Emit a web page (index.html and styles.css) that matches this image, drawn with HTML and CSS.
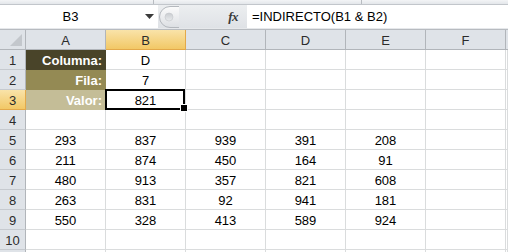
FILE: index.html
```html
<!DOCTYPE html>
<html lang="es">
<head>
<meta charset="utf-8">
<title>INDIRECTO</title>
<link rel="stylesheet" href="styles.css">
</head>
<body>
<div class="fbar">
  <div class="strip"><span class="sep s1"></span><span class="sep s2"></span></div>
  <div class="frow">
    <div class="namebox">
      <span class="ref">B3</span>
      <svg class="dd" width="9" height="5" viewBox="0 0 9 5"><path d="M0 0H9L4.5 5Z" fill="#3b3b3b"/></svg>
    </div>
    <div class="mid">
      <svg class="knob" width="20" height="22" viewBox="0 0 20 22">
        <defs>
          <linearGradient id="kg" x1="0" y1="0" x2="0" y2="1">
            <stop offset="0" stop-color="#fbfbfb"/>
            <stop offset="1" stop-color="#dcdfe3"/>
          </linearGradient>
          <linearGradient id="dg" x1="0" y1="0" x2="0" y2="1">
            <stop offset="0" stop-color="#c9ccd0"/>
            <stop offset="1" stop-color="#e9ebed"/>
          </linearGradient>
        </defs>
        <path d="M20 0.5H11A10.5 10.5 0 0 0 11 21.5H20" fill="url(#kg)" stroke="#b4b8bd"/>
        <circle cx="10" cy="11" r="4" fill="url(#dg)" stroke="#c4c7cb" stroke-width="0.6"/>
      </svg>
      <span class="fx">fx</span>
    </div>
    <div class="input">=INDIRECTO(B1 &amp; B2)</div>
  </div>
</div>
<div class="sheet">
  <div class="hd corner"><svg width="12" height="12" viewBox="0 0 12 12"><path d="M12 0V12H0Z" fill="#c3c7cc"/></svg></div>
  <div class="hd col">A</div>
  <div class="hd col sel">B</div>
  <div class="hd col">C</div>
  <div class="hd col">D</div>
  <div class="hd col">E</div>
  <div class="hd col">F</div>
  <div class="hd col rest"></div>

  <div class="hd row">1</div>
  <div class="c lbl l1">Columna:</div>
  <div class="c">D</div>
  <div class="c"></div><div class="c"></div><div class="c"></div><div class="c"></div><div class="c"></div>

  <div class="hd row">2</div>
  <div class="c lbl l2">Fila:</div>
  <div class="c">7</div>
  <div class="c"></div><div class="c"></div><div class="c"></div><div class="c"></div><div class="c"></div>

  <div class="hd row sel">3</div>
  <div class="c lbl l3">Valor:</div>
  <div class="c active">821</div>
  <div class="c"></div><div class="c"></div><div class="c"></div><div class="c"></div><div class="c"></div>

  <div class="hd row">4</div>
  <div class="c"></div><div class="c"></div><div class="c"></div><div class="c"></div><div class="c"></div><div class="c"></div><div class="c"></div>

  <div class="hd row">5</div>
  <div class="c">293</div><div class="c">837</div><div class="c">939</div><div class="c">391</div><div class="c">208</div><div class="c"></div><div class="c"></div>

  <div class="hd row">6</div>
  <div class="c">211</div><div class="c">874</div><div class="c">450</div><div class="c">164</div><div class="c">91</div><div class="c"></div><div class="c"></div>

  <div class="hd row">7</div>
  <div class="c">480</div><div class="c">913</div><div class="c">357</div><div class="c">821</div><div class="c">608</div><div class="c"></div><div class="c"></div>

  <div class="hd row">8</div>
  <div class="c">263</div><div class="c">831</div><div class="c">92</div><div class="c">941</div><div class="c">181</div><div class="c"></div><div class="c"></div>

  <div class="hd row">9</div>
  <div class="c">550</div><div class="c">328</div><div class="c">413</div><div class="c">589</div><div class="c">924</div><div class="c"></div><div class="c"></div>

  <div class="hd row">10</div>
  <div class="c"></div><div class="c"></div><div class="c"></div><div class="c"></div><div class="c"></div><div class="c"></div><div class="c"></div>

  <div class="hd row stub"></div>
  <div class="c stub"></div><div class="c stub"></div><div class="c stub"></div><div class="c stub"></div><div class="c stub"></div><div class="c stub"></div><div class="c stub"></div>
</div>
</body>
</html>
```
FILE: styles.css
```css
* { box-sizing: border-box; }
html, body { margin: 0; padding: 0; background: #fff; }
body {
  width: 508px;
  height: 252px;
  overflow: hidden;
  font-family: "Liberation Sans", Arial, sans-serif;
  font-size: 13px;
  color: #000;
}

/* formula bar */
.fbar { height: 30px; background: #dfe3e8; display: flex; flex-direction: column; }
.strip {
  height: 5px;
  background: linear-gradient(#f3f4f6, #e3e6ea);
  border-bottom: 1px solid #c2c6cb;
  position: relative;
}
.sep { position: absolute; top: 0; width: 1px; height: 4px; background: #b8bcc1; }
.s1 { left: 153px; }
.s2 { left: 361px; }
.frow {
  flex: 1;
  display: flex;
  border-bottom: 1px solid #b7bbc0;
  padding-bottom: 1px;
  background: #e6e8eb;
}
.namebox {
  width: 158px;
  background: #fff;
  display: flex;
  align-items: center;
  padding-right: 4px;
}
.ref { flex: 1; text-align: center; padding-right: 2px; color: #000; }
.dd { margin-left: 2px; }
.mid {
  width: 89px;
  display: flex;
  align-items: center;
  background: linear-gradient(#eceef0, #dfe2e6);
}
.knob { display: block; margin-left: 1px; }
.fx {
  margin-left: auto;
  margin-right: 9px;
  font-family: "Liberation Serif", "Times New Roman", serif;
  font-style: italic;
  font-weight: bold;
  font-size: 13px;
  color: #3a3a3a;
  letter-spacing: -0.5px;
}
.input {
  flex: 1;
  background: #fff;
  padding-left: 5px;
  display: flex;
  align-items: center;
  font-size: 13px;
}

/* sheet */
.sheet {
  display: grid;
  grid-template-columns: 26px repeat(6, 80px) 1fr;
  grid-template-rows: repeat(11, 20px) 2px;
}
.hd {
  background: #dfe3e8;
  color: #2b2b2b;
  text-align: center;
  padding-top: 3px;
  line-height: 16px;
  border-right: 1px solid #b1b5ba;
  border-bottom: 1px solid #b1b5ba;
}
.hd.row { border-bottom-color: #c6cacf; }
.hd.rest { border-right: 0; }
.hd.corner {
  display: flex;
  align-items: flex-end;
  justify-content: flex-end;
  padding: 0 3px 3px 0;
}
.hd.corner svg { display: block; }
.hd.sel {
  background: linear-gradient(#f9e3a9, #f2c866);
  border-color: #e3a94a;
}
.c {
  border-right: 1px solid #dadcdd;
  border-bottom: 1px solid #dadcdd;
  text-align: center;
  padding-top: 3px;
  line-height: 16px;
  white-space: nowrap;
}
.stub { padding: 0; border-bottom: 0; }
.lbl {
  text-align: right;
  padding-right: 3px;
  color: #fff;
  font-weight: bold;
}
.l1 { background: #494429; border-color: #494429; }
.l2 { background: #948a54; border-color: #948a54; }
.l3 { background: #c4bd97; border-color: #c4bd97; }
.active { position: relative; }
.active::before {
  content: "";
  position: absolute;
  left: -1px;
  top: -1px;
  right: 0;
  bottom: -1px;
  border: 2px solid #000;
}
.active::after {
  content: "";
  position: absolute;
  right: -3px;
  bottom: -3px;
  width: 6px;
  height: 6px;
  background: #000;
  border: 1px solid #fff;
}
```
